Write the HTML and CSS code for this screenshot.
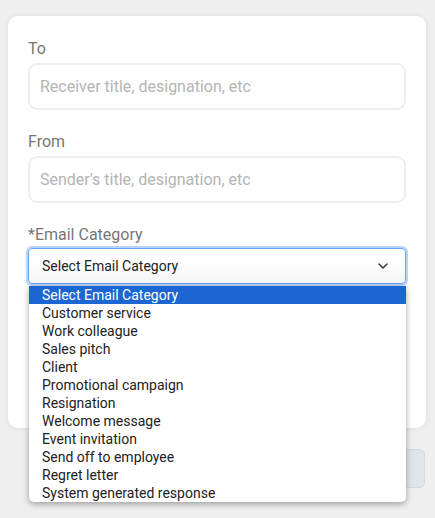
FILE: index.html
```html
<!DOCTYPE html>
<html>
<head>
<meta charset="utf-8">
<link rel="stylesheet" href="styles.css">
</head>
<body>
<div class="page">
  <div class="card">
    <div class="field">
      <label class="label">To</label>
      <input class="input" type="text" placeholder="Receiver title, designation, etc">
    </div>
    <div class="field">
      <label class="label">From</label>
      <input class="input" type="text" placeholder="Sender's title, designation, etc">
    </div>
    <div class="field">
      <label class="label">*Email Category</label>
      <div class="select-wrap">
        <div class="select">
          <span>Select Email Category</span>
          <svg class="chev" width="10" height="6" viewBox="0 0 10 6"><path d="M1 1l4 4 4-4" fill="none" stroke="#333" stroke-width="1.5" stroke-linecap="round" stroke-linejoin="round"/></svg>
        </div>
        <ul class="options">
          <li class="opt active">Select Email Category</li>
          <li class="opt">Customer service</li>
          <li class="opt">Work colleague</li>
          <li class="opt">Sales pitch</li>
          <li class="opt">Client</li>
          <li class="opt">Promotional campaign</li>
          <li class="opt">Resignation</li>
          <li class="opt">Welcome message</li>
          <li class="opt">Event invitation</li>
          <li class="opt">Send off to employee</li>
          <li class="opt">Regret letter</li>
          <li class="opt">System generated response</li>
        </ul>
      </div>
    </div>
  </div>
  <div class="actions">
    <button class="btn"></button>
  </div>
</div>
</body>
</html>
```
FILE: styles.css
```css
html, body {
  margin: 0;
  padding: 0;
}
body {
  background: #efefef;
  font-family: Roboto, "Liberation Sans", Arial, sans-serif;
  height: 518px;
  overflow: hidden;
}
.page {
  padding: 16px 9px 0 8px;
}
.card {
  background: #fff;
  border-radius: 10px;
  box-shadow: 0 0 6px rgba(0,0,0,0.08);
  padding: 23px 20px 144px 20px;
  display: flex;
  flex-direction: column;
  gap: 22px;
}
.field {
  display: flex;
  flex-direction: column;
}
.label {
  font-size: 16px;
  line-height: 20px;
  color: #767676;
  margin-bottom: 4px;
}
.input {
  box-sizing: border-box;
  height: 47px;
  width: 100%;
  border: 2px solid #eeeeee;
  border-radius: 9px;
  padding: 0 10px;
  font-family: inherit;
  font-size: 16px;
  color: #333;
  outline: none;
  background: #fff;
}
.input::placeholder {
  color: #b4b4b4;
}
.select-wrap {
  position: relative;
  margin-top: -1px;
}
.select {
  box-sizing: border-box;
  height: 36px;
  border: 1px solid #6aa2ee;
  border-radius: 4px;
  box-shadow: 0 0 0 2px #b9d5fb;
  background: linear-gradient(#ffffff 40%, #f4f4f4);
  display: flex;
  align-items: center;
  justify-content: space-between;
  padding: 0 17px 0 13px;
  font-size: 14px;
  color: #222;
}
.chev {
  display: block;
}
.options {
  position: absolute;
  left: 1px;
  right: 0;
  top: 38px;
  margin: 0;
  padding: 0;
  list-style: none;
  background: #fff;
  border-radius: 0 0 5px 5px;
  box-shadow: 0 2px 6px rgba(0,0,0,0.35);
  overflow: hidden;
  z-index: 5;
}
.opt {
  height: 18px;
  line-height: 18px;
  font-size: 14px;
  color: #222;
  padding-left: 13px;
  white-space: nowrap;
}
.opt.active {
  background: #1b66d2;
  color: #fff;
}
.actions {
  display: flex;
  justify-content: flex-end;
  padding: 21px 1px 0 0;
}
.btn {
  width: 200px;
  height: 39px;
  background: #e0e5ec;
  border: 1px solid #d6dbe2;
  border-radius: 5px;
}
```
